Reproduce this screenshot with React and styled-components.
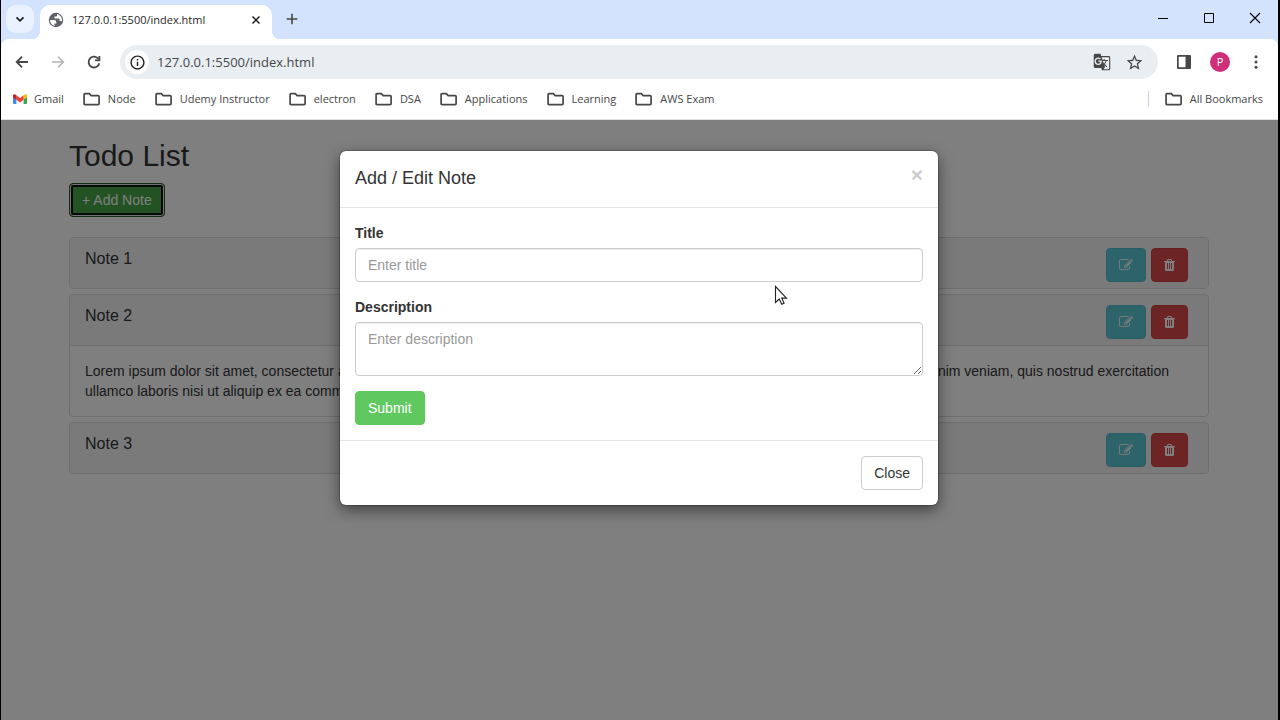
import React from 'react';
import styled, { createGlobalStyle, css } from 'styled-components';
import { MdGTranslate, MdInfoOutline, MdStarBorder } from 'react-icons/md';

const GlobalStyle = createGlobalStyle`
  *, *::before, *::after {
    box-sizing: border-box;
  }

  body {
    margin: 0;
    font-family: 'Liberation Sans', Arial, sans-serif;
    font-size: 14px;
    line-height: 20px;
    color: #333;
    background: #000;
  }

  button, input, textarea {
    font-family: inherit;
    font-size: inherit;
    line-height: inherit;
  }
`;

/* ---------- browser window ---------- */

const Window = styled.div`
  display: flex;
  flex-direction: column;
  min-height: 100vh;
  padding: 0 2px 0 1px;
  background: #000;
`;

const Chrome = styled.header`
  font-family: 'Open Sans', 'Noto Sans', sans-serif;
  font-size: 11px;
  line-height: 16px;
  color: #474747;
  background: #d3e3fd;
`;

const TabStrip = styled.div`
  display: flex;
  align-items: flex-end;
  height: 39px;
  padding-left: 5px;
`;

const IconButton = styled.button`
  display: flex;
  align-items: center;
  justify-content: center;
  flex: none;
  width: ${(p) => p.$width || 28}px;
  height: 28px;
  padding: 0;
  border: 0;
  border-radius: 14px;
  background: transparent;
  color: ${(p) => p.$color || '#474747'};
`;

const TabSearch = styled(IconButton)`
  align-self: flex-start;
  margin: 5px 6px 0 0;
  border-radius: 10px;
  background: #e9f1fe;
  color: #1f1f1f;
`;

const Tab = styled.div`
  position: relative;
  display: flex;
  align-items: center;
  gap: 8px;
  width: 232px;
  height: 34px;
  padding: 0 2px 5px 8px;
  border-radius: 10px 10px 0 0;
  background: #fff;
  color: #1f1f1f;

  &::before,
  &::after {
    content: '';
    position: absolute;
    bottom: 0;
    width: 8px;
    height: 8px;
  }

  &::before {
    right: 100%;
    background: radial-gradient(circle at 0 0, transparent 8px, #fff 8px);
  }

  &::after {
    left: 100%;
    background: radial-gradient(circle at 100% 0, transparent 8px, #fff 8px);
  }
`;

const TabTitle = styled.span`
  flex: 1;
`;

const NewTab = styled(IconButton)`
  align-self: flex-start;
  margin: 5px auto 0 6px;
`;

const WindowControls = styled.div`
  display: flex;
  align-self: flex-start;
  padding-top: 4px;
`;

const Toolbar = styled.div`
  display: flex;
  align-items: center;
  height: 46px;
  padding: 0 8px 0 7px;
  border-radius: 8px 8px 0 0;
  background: #fff;
`;

const NavButtons = styled.div`
  display: flex;
  gap: 8px;
  margin-right: 12px;
`;

const AddressBar = styled.div`
  display: flex;
  align-items: center;
  flex: 1;
  height: 34px;
  margin-right: 12px;
  padding: 0 10px 0 5px;
  border-radius: 17px;
  background: #e9eef3;
`;

const SiteInfo = styled(IconButton)`
  width: 24px;
  height: 24px;
  background: #fff;
  color: #1f1f1f;
`;

const Url = styled.input`
  flex: 1;
  min-width: 0;
  padding: 0 0 0 8px;
  border: 0;
  outline: 0;
  background: transparent;
  color: #474747;
  font-size: 13px;
`;

const AddressActions = styled.div`
  display: flex;
  gap: 4px;
`;

const ToolbarActions = styled.div`
  display: flex;
  gap: 8px;
`;

const Avatar = styled.span`
  width: 20px;
  height: 20px;
  border-radius: 50%;
  background: #cf2e78;
  color: #fff;
  font-size: 11px;
  line-height: 20px;
  text-align: center;
`;

const BookmarkBar = styled.nav`
  display: flex;
  align-items: center;
  gap: 19px;
  height: 35px;
  padding: 0 15px 6px 11px;
  border-bottom: 1px solid #dfe3e8;
  background: #fff;
`;

const Bookmark = styled.a`
  display: flex;
  align-items: center;
  gap: ${(p) => (p.$wide ? 7 : 6)}px;
  color: #474747;
  text-decoration: none;
  white-space: nowrap;
`;

const AllBookmarks = styled.div`
  display: flex;
  align-items: center;
  height: 16px;
  margin-left: auto;
  padding-left: 16px;
  border-left: 1px solid #c7d0dc;
`;

/* ---------- page ---------- */

const Page = styled.main`
  position: relative;
  flex: 1;
  padding-right: 1px;
  background: #fff;
`;

const Container = styled.div`
  max-width: 1140px;
  margin: 0 auto;
  padding-top: 20px;
`;

const Heading = styled.h2`
  margin: 0 0 12px;
  font-size: 30px;
  line-height: 31px;
  font-weight: 400;
`;

const buttonKinds = {
  success: css`
    background: #5fc95f;
    border-color: #5fc95f;
    color: #fff;
  `,
  focused: css`
    background: #46a446;
    border-color: #255625;
    box-shadow: inset 0 0 0 1px #e6e6e6, inset 0 0 0 3px #101010;
    color: #fff;
  `,
  info: css`
    background: #5bc8d4;
    border-color: #52bcc8;
    color: rgba(255, 255, 255, 0.85);
  `,
  danger: css`
    background: #d9484a;
    border-color: #cc4144;
    color: #fff;
  `,
  default: css`
    background: #fff;
    border-color: #ccc;
    color: #333;
  `,
};

const Button = styled.button`
  display: inline-flex;
  align-items: center;
  height: 34px;
  padding: 0 12px;
  border: 1px solid transparent;
  border-radius: 4px;
  ${(p) => buttonKinds[p.$kind || 'default']}
`;

const PanelGroup = styled.div`
  display: flex;
  flex-direction: column;
  gap: 5px;
  margin-top: 20px;
`;

const Panel = styled.section`
  border: 1px solid #ddd;
  border-radius: 4px;
  overflow: hidden;
`;

const PanelHeading = styled.div`
  display: flex;
  justify-content: space-between;
  padding: 10px 20px 6px 15px;
  background: #f5f5f5;
`;

const PanelTitle = styled.h4`
  margin: 0;
  font-size: 16px;
  font-weight: 400;
  line-height: 22px;
`;

const PanelActions = styled.div`
  display: flex;
  gap: 5px;
`;

const PanelBody = styled.div`
  padding: 15px;
  border-top: 1px solid #ddd;
`;

/* ---------- modal ---------- */

const Backdrop = styled.div`
  position: absolute;
  inset: 0;
  display: flex;
  align-items: flex-start;
  justify-content: center;
  padding: 31px 1px 0 0;
  background: rgba(0, 0, 0, 0.5);
`;

const Dialog = styled.div`
  width: 100%;
  max-width: 598px;
  border-radius: 6px;
  background: #fff;
  box-shadow: 0 0 0 1px rgba(0, 0, 0, 0.2), 0 5px 15px rgba(0, 0, 0, 0.5);
`;

const DialogHeader = styled.div`
  display: flex;
  align-items: flex-start;
  justify-content: space-between;
  padding: 15px 15px 17px;
  border-bottom: 1px solid #e5e5e5;
`;

const DialogTitle = styled.h4`
  margin: 0;
  font-size: 18px;
  font-weight: 400;
  line-height: 24px;
`;

const CloseIcon = styled.button`
  padding: 0;
  border: 0;
  background: transparent;
  color: #000;
  font-size: 21px;
  font-weight: 700;
  line-height: 18px;
  opacity: 0.2;
`;

const Form = styled.form`
  padding: 15px;
`;

const Field = styled.div`
  display: flex;
  flex-direction: column;
  gap: 5px;
  margin-bottom: 15px;
`;

const Label = styled.label`
  font-weight: 700;
`;

const controlStyles = css`
  width: 100%;
  padding: 6px 12px;
  border: 1px solid #ccc;
  border-radius: 4px;
  background: #fff;
  color: #555;
  box-shadow: inset 0 1px 1px rgba(0, 0, 0, 0.075);

  &::placeholder {
    color: #999;
  }
`;

const Input = styled.input`
  ${controlStyles}
  height: 34px;
`;

const Textarea = styled.textarea`
  ${controlStyles}
  display: block;
  height: 54px;
`;

const DialogFooter = styled.div`
  display: flex;
  justify-content: flex-end;
  padding: 15px;
  border-top: 1px solid #e5e5e5;
`;

const Pointer = styled.svg`
  position: absolute;
  top: 165px;
  left: 773px;
  pointer-events: none;
`;

/* ---------- icons ---------- */

const Stroke = ({ d, size = 16, width = 2 }) => (
  <svg width={size} height={size} viewBox="0 0 16 16" fill="none" stroke="currentColor" strokeWidth={width}>
    <path d={d} />
  </svg>
);

const FolderIcon = () => (
  <svg width="18" height="16" viewBox="0 0 18 16" fill="none" stroke="#474747" strokeWidth="1.7">
    <path d="M2 2.600h4.300l1.800 2h7.100q.9 0 .9.900v7.200q0 .9-.9.900H2q-.9 0-.9-.9V3.500q0-.9.9-.9z" strokeLinejoin="round" />
  </svg>
);

const GmailIcon = () => (
  <svg width="16" height="16" viewBox="0 0 16 16">
    <path d="M1 4.500v7.500q0 1 1 1h2.400V6z" fill="#4285f4" />
    <path d="M11.600 6v7H14q1 0 1-1V4.500z" fill="#34a853" />
    <path d="M4.400 4.300v4.500L8 11.500l3.600-2.700V4.300L8 7z" fill="#ea4335" />
    <path d="M1 4.500V6.300l3.400 2.500V4.300L3.400 3.500Q1.200 2.500 1 4.500z" fill="#c5221f" />
    <path d="M15 4.500V6.300l-3.400 2.500V4.300l1-.8Q14.800 2.500 15 4.500z" fill="#fbbc04" />
  </svg>
);

const GlobeIcon = () => (
  <svg width="16" height="16" viewBox="0 0 16 16">
    <circle cx="8" cy="8" r="7.200" fill="#5f6368" />
    <path
      d="M2 8h4q2.300 0 2.300 2v1.500H6.500v2.400Q2.200 12.500 2 8zM9.200 2v1.200q0 1-1 1.200H6.500v2.100h4.100q1 0 1 1v1.600h1.500q.6 0 .8.500.3-1 .1-2Q13.300 3.200 9.200 2z"
      fill="#fff"
    />
  </svg>
);

const ReloadIcon = () => (
  <svg width="16" height="16" viewBox="0 0 16 16" fill="none" stroke="currentColor" strokeWidth="1.800">
    <path d="M13.300 9.200A5.400 5.400 0 1 1 12.600 5.200" />
    <path d="M13.400 2v4.400H9" />
  </svg>
);

const SidePanelIcon = () => (
  <svg width="16" height="16" viewBox="0 0 16 16">
    <path
      fill="currentColor"
      fillRule="evenodd"
      d="M2 1h12q1 0 1 1v12q0 1-1 1H2q-1 0-1-1V2q0-1 1-1zm.7 1.700v10.600H9.500V2.700z"
    />
  </svg>
);

const DotsIcon = () => (
  <svg width="16" height="16" viewBox="0 0 16 16" fill="currentColor">
    <circle cx="8" cy="2.800" r="1.500" />
    <circle cx="8" cy="8" r="1.500" />
    <circle cx="8" cy="13.200" r="1.500" />
  </svg>
);

const EditIcon = () => (
  <svg width="14" height="14" viewBox="0 0 1792 1792" fill="currentColor">
    <path d="M888 1184l116-116-152-152-116 116v56h96v96h56zm440-720q-16-16-33 1l-350 350q-17 17-1 33t33-1l350-350q17-17 1-33zm80 594v190q0 119-84.5 203.5t-203.5 84.5h-832q-119 0-203.5-84.5t-84.5-203.5v-832q0-119 84.5-203.5t203.5-84.5h832q63 0 117 25 15 7 18 23 3 17-9 29l-49 49q-14 14-32 8-23-6-45-6h-832q-66 0-113 47t-47 113v832q0 66 47 113t113 47h832q66 0 113-47t47-113v-126q0-13 9-22l64-64q15-15 35-7t20 29zm-96-738l288 288-672 672h-288v-288zm444 132l-92 92-288-288 92-92q28-28 68-28t68 28l152 152q28 28 28 68t-28 68z" />
  </svg>
);

const TrashIcon = () => (
  <svg width="11" height="14" viewBox="192 0 1408 1792" fill="currentColor">
    <path d="M704 1376v-704q0-14-9-23t-23-9h-64q-14 0-23 9t-9 23v704q0 14 9 23t23 9h64q14 0 23-9t9-23zm256 0v-704q0-14-9-23t-23-9h-64q-14 0-23 9t-9 23v704q0 14 9 23t23 9h64q14 0 23-9t9-23zm256 0v-704q0-14-9-23t-23-9h-64q-14 0-23 9t-9 23v704q0 14 9 23t23 9h64q14 0 23-9t9-23zm-544-992h448l-48-117q-7-9-17-11h-317q-10 2-17 11zm928 32v64q0 14-9 23t-23 9h-96v948q0 83-47 143.5t-113 60.5h-832q-66 0-113-58.5t-47-141.5v-952h-96q-14 0-23-9t-9-23v-64q0-14 9-23t23-9h309l70-167q15-37 54-63t79-26h320q40 0 79 26t54 63l70 167h309q14 0 23 9t9 23z" />
  </svg>
);

/* ---------- data ---------- */

const bookmarks = ['Node', 'Udemy Instructor', 'electron', 'DSA', 'Applications', 'Learning', 'AWS Exam'];

const notes = [
  { title: 'Note 1' },
  {
    title: 'Note 2',
    description:
      'Lorem ipsum dolor sit amet, consectetur adipiscing elit, sed do eiusmod tempor incididunt ut labore et dolore magna aliqua. Ut enim ad minim veniam, quis nostrud exercitation ullamco laboris nisi ut aliquip ex ea commodo consequat.',
  },
  { title: 'Note 3' },
];

function BrowserChrome() {
  return (
    <Chrome>
      <TabStrip>
        <TabSearch aria-label="Search tabs">
          <Stroke d="M4.500 6.300 8 9.800l3.500-3.500" width={1.8} />
        </TabSearch>
        <Tab>
          <GlobeIcon />
          <TabTitle>127.0.0.1:5500/index.html</TabTitle>
          <IconButton aria-label="Close tab" $color="#1f1f1f">
            <Stroke d="M4.500 4.500l7 7M11.500 4.500l-7 7" width={1.5} />
          </IconButton>
        </Tab>
        <NewTab aria-label="New tab">
          <Stroke d="M8 2.700v10.600M2.700 8h10.600" width={1.6} />
        </NewTab>
        <WindowControls>
          <IconButton aria-label="Minimize" $width={46} $color="#000">
            <Stroke d="M3 8.500h10" width={1} />
          </IconButton>
          <IconButton aria-label="Maximize" $width={46} $color="#000">
            <Stroke d="M3.500 3.500h9v9h-9z" width={1} />
          </IconButton>
          <IconButton aria-label="Close" $width={46} $color="#000">
            <Stroke d="M3 3l10 10M13 3L3 13" width={1.1} />
          </IconButton>
        </WindowControls>
      </TabStrip>
      <Toolbar>
        <NavButtons>
          <IconButton aria-label="Back">
            <Stroke d="M14 8H3M8 2.700 2.700 8 8 13.300" width={1.8} />
          </IconButton>
          <IconButton aria-label="Forward" $color="#b0b2b5">
            <Stroke d="M2 8h11M8 2.700 13.300 8 8 13.300" width={1.6} />
          </IconButton>
          <IconButton aria-label="Reload">
            <ReloadIcon />
          </IconButton>
        </NavButtons>
        <AddressBar>
          <SiteInfo aria-label="View site information">
            <MdInfoOutline size={17} />
          </SiteInfo>
          <Url aria-label="Address" defaultValue="127.0.0.1:5500/index.html" />
          <AddressActions>
            <IconButton aria-label="Translate this page">
              <MdGTranslate size={18} />
            </IconButton>
            <IconButton aria-label="Bookmark this tab">
              <MdStarBorder size={19} />
            </IconButton>
          </AddressActions>
        </AddressBar>
        <ToolbarActions>
          <IconButton aria-label="Side panel">
            <SidePanelIcon />
          </IconButton>
          <IconButton aria-label="Profile">
            <Avatar>P</Avatar>
          </IconButton>
          <IconButton aria-label="Menu">
            <DotsIcon />
          </IconButton>
        </ToolbarActions>
      </Toolbar>
      <BookmarkBar>
        <Bookmark href="#gmail">
          <GmailIcon />
          Gmail
        </Bookmark>
        {bookmarks.map((name) => (
          <Bookmark key={name} href="#folder" $wide>
            <FolderIcon />
            {name}
          </Bookmark>
        ))}
        <AllBookmarks>
          <Bookmark href="#all" $wide>
            <FolderIcon />
            All Bookmarks
          </Bookmark>
        </AllBookmarks>
      </BookmarkBar>
    </Chrome>
  );
}

function NoteModal() {
  return (
    <Backdrop>
      <Dialog role="dialog" aria-labelledby="dialog-title">
        <DialogHeader>
          <DialogTitle id="dialog-title">Add / Edit Note</DialogTitle>
          <CloseIcon aria-label="Close">×</CloseIcon>
        </DialogHeader>
        <Form onSubmit={(e) => e.preventDefault()}>
          <Field>
            <Label htmlFor="title">Title</Label>
            <Input id="title" type="text" placeholder="Enter title" />
          </Field>
          <Field>
            <Label htmlFor="description">Description</Label>
            <Textarea id="description" placeholder="Enter description" />
          </Field>
          <Button type="submit" $kind="success">Submit</Button>
        </Form>
        <DialogFooter>
          <Button type="button">Close</Button>
        </DialogFooter>
      </Dialog>
    </Backdrop>
  );
}

export default function App() {
  return (
    <Window>
      <GlobalStyle />
      <BrowserChrome />
      <Page>
        <Container>
          <Heading>Todo List</Heading>
          <Button $kind="focused">+ Add Note</Button>
          <PanelGroup>
            {notes.map((note) => (
              <Panel key={note.title}>
                <PanelHeading>
                  <PanelTitle>{note.title}</PanelTitle>
                  <PanelActions>
                    <Button $kind="info" aria-label="Edit note">
                      <EditIcon />
                    </Button>
                    <Button $kind="danger" aria-label="Delete note">
                      <TrashIcon />
                    </Button>
                  </PanelActions>
                </PanelHeading>
                {note.description && <PanelBody>{note.description}</PanelBody>}
              </Panel>
            ))}
          </PanelGroup>
        </Container>
        <NoteModal />
        <Pointer width="14" height="22" viewBox="0 0 14 22">
          <path d="M1.500 1.500v16l3.700-3.500 2.600 5.300 2.300-1-2.400-5.200h4.800z" fill="#fff" stroke="#222" strokeWidth="1.100" />
        </Pointer>
      </Page>
    </Window>
  );
}
